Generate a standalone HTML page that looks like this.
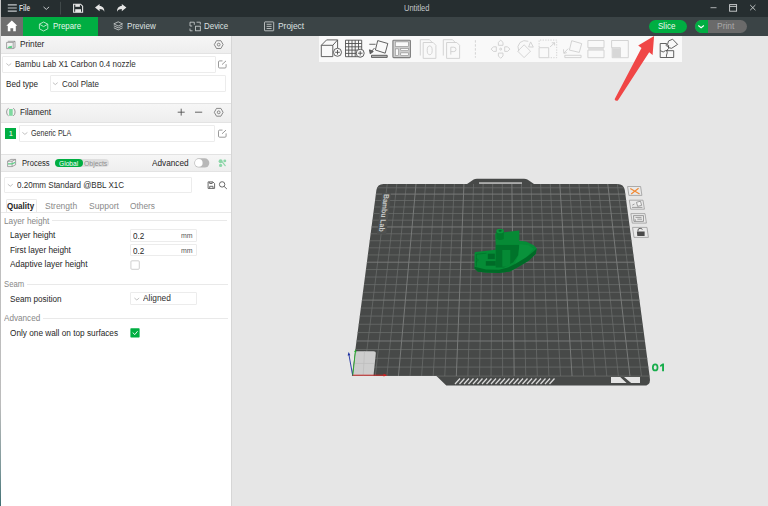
<!DOCTYPE html>
<html><head><meta charset="utf-8">
<style>
*{margin:0;padding:0;box-sizing:border-box}
html,body{width:768px;height:506px;overflow:hidden;background:#e6e6e6;font-family:"Liberation Sans",sans-serif;position:relative}
.a{position:absolute}
.t{position:absolute;white-space:nowrap;line-height:12px;height:12px;color:#333;transform-origin:0 0}
.hdr{position:absolute;left:1px;width:230px;background:linear-gradient(#f6f6f6,#eeeeee);border-bottom:1px solid #e3e3e3}
.box{position:absolute;border:1px solid #ececec;border-radius:1px}
.ln{position:absolute;height:1px;background:#e9e9e9}
</style></head><body>
<!-- bars -->
<div class="a" style="left:0;top:0;width:768px;height:17px;background:#262e30"></div>
<div class="a" style="left:0;top:17px;width:768px;height:19px;background:#3b4446"></div>
<div class="a" style="left:1px;top:17px;width:21.5px;height:19px;background:#6e6e6e"></div>
<div class="a" style="left:22.5px;top:17px;width:75px;height:19px;background:#00ae42"></div>
<div class="a" style="left:0;top:0;width:1px;height:506px;background:linear-gradient(#c6c6c6 0,#bcbcbc 80%,#7a9698 93%,#3e6e72 100%)"></div>

<!-- panel -->
<div class="a" style="left:1px;top:36px;width:230px;height:470px;background:#fff"></div>
<div class="a" style="left:231px;top:36px;width:1px;height:470px;background:#d6d6d6"></div>
<div class="hdr" style="top:36px;height:17.5px"></div>
<div class="hdr" style="top:103px;height:19.5px;border-top:1px solid #e3e3e3"></div>
<div class="hdr" style="top:153.5px;height:18px;border-top:1px solid #e3e3e3"></div>
<div class="box" style="left:2px;top:56px;width:214px;height:16.5px"></div>
<div class="box" style="left:49.5px;top:75.3px;width:176.5px;height:17px"></div>
<div class="a" style="left:5px;top:127.8px;width:11px;height:11.2px;background:#00ae42"></div>
<div class="box" style="left:19px;top:125px;width:196px;height:17px"></div>
<div class="a" style="left:55.4px;top:158.6px;width:53.4px;height:8.7px;border-radius:4.4px;background:#dedede"></div>
<div class="a" style="left:55.4px;top:158.6px;width:27.5px;height:8.7px;border-radius:4.4px;background:#00ae42"></div>
<div class="box" style="left:4.4px;top:177.3px;width:187.6px;height:16px"></div>
<div class="ln" style="left:1px;top:211.5px;width:230px"></div>
<div class="a" style="left:5.5px;top:199.4px;width:31px;height:13px;border:1px solid #e9e9e9;border-bottom:none;border-radius:1.5px 1.5px 0 0;background:#fff"></div>
<div class="ln" style="left:52.3px;top:220px;width:175.2px"></div>
<div class="box" style="left:130.2px;top:229.2px;width:66.5px;height:12.5px"></div>
<div class="box" style="left:130.2px;top:244.2px;width:66.5px;height:12.2px"></div>
<div class="ln" style="left:27px;top:283.5px;width:200.5px"></div>
<div class="box" style="left:130.4px;top:292.3px;width:66.4px;height:13.1px"></div>
<div class="ln" style="left:43px;top:317.5px;width:184.5px"></div>

<svg class="a" style="left:0;top:0" width="232" height="506">
  <!-- hamburger -->
  <g stroke="#c4c8ca" stroke-width="1.2" fill="none">
    <path d="M7.8 4.8H16.8M7.8 8H16.8M7.8 11.2H16.8"/>
    <path d="M43.5 6.9L46.3 9.4L49.1 6.9" stroke-width="1"/>
  </g>
  <rect x="60.2" y="1.8" width="0.8" height="12.8" fill="#485052"/>
  <!-- save -->
  <path d="M73.6 4.2H80.6L82.6 6.2V12.2H73.6Z" fill="none" stroke="#e6e6e6" stroke-width="1.1"/>
  <rect x="75.3" y="4.2" width="4.6" height="2.6" fill="#e6e6e6"/>
  <rect x="75.2" y="9.2" width="5.8" height="3" fill="#e6e6e6"/>
  <!-- undo redo -->
  <path d="M95 7.6L99.6 3.9V6C102.6 6 104.6 8.3 104.3 11.7C103.3 9.7 101.7 9.1 99.6 9.1V11.3Z" fill="#e6e6e6"/>
  <path d="M126.4 7.6L121.8 3.9V6C118.8 6 116.8 8.3 117.1 11.7C118.1 9.7 119.7 9.1 121.8 9.1V11.3Z" fill="#e6e6e6"/>
  <!-- home -->
  <path d="M11.8 20.6L17.3 25.8H15.8V31.3H13.2V28.3H10.4V31.3H7.8V25.8H6.3Z" fill="#fff"/>
  <!-- prepare cube -->
  <g fill="none" stroke="#cdeed8" stroke-width="0.85">
    <path d="M43.6 22L47.8 24.2V28.8L43.6 31L39.4 28.8V24.2Z"/>
    <path d="M39.4 24.2L43.6 26.6L47.8 24.2"/>
  </g>
  <!-- printer icon -->
  <g fill="none" stroke="#8f8f8f" stroke-width="0.8">
    <path d="M6.6 42.4H13.2V48.6H6.6Z"/>
    <path d="M7.8 41.3H15V47.6L13.2 48.6"/>
    <path d="M13.2 42.4L15 41.3"/>
  </g>
  <path d="M7.6 47.9L8.7 46.4L11.9 45.8V47.9Z" fill="#5ccf86"/>
  <!-- gear printer -->
  <g fill="none" stroke="#6f6f6f" stroke-width="0.8">
    <path d="M214.3 44.6L216.5 40.7H220.9L223.1 44.6L220.9 48.5H216.5Z" stroke-linejoin="round"/>
    <circle cx="218.7" cy="44.6" r="1.4"/>
  </g>
  <!-- edit icons -->
  <g fill="none" stroke="#8f8f8f" stroke-width="0.8">
    <path d="M222.5 60.9H219.6Q218.5 60.9 218.5 62V66.9Q218.5 68 219.6 68H225Q226.1 68 226.1 66.9V64.2M222 64.6L226 60.9" stroke-width="0.9"/>
    <path d="M222.5 130.1H219.6Q218.5 130.1 218.5 131.2V136.1Q218.5 137.2 219.6 137.2H225Q226.1 137.2 226.1 136.1V133.4M222 133.8L226 130.1" stroke-width="0.9"/>
  </g>
  <!-- filament icon -->
  <rect x="9.1" y="109" width="3.6" height="6.8" fill="#7fd9a0"/>
  <g fill="none" stroke="#8a8a8a" stroke-width="0.85">
    <path d="M8.6 108.3Q6.6 108.8 6.6 112Q6.6 115.2 8.6 115.8M13.1 108.3Q15.1 108.8 15.1 112Q15.1 115.2 13.1 115.8"/>
  </g>
  <!-- plus minus gear -->
  <path d="M181.2 108.7V115.6M177.7 112.2H184.7M195 112.2H202.2" stroke="#4a4a4a" stroke-width="0.85"/>
  <g fill="none" stroke="#6f6f6f" stroke-width="0.8">
    <path d="M214.3 112.3L216.5 108.4H220.9L223.1 112.3L220.9 116.2H216.5Z" stroke-linejoin="round"/>
    <circle cx="218.7" cy="112.3" r="1.4"/>
  </g>
  <!-- process icon -->
  <g fill="none" stroke="#8f8f8f" stroke-width="0.8">
    <path d="M7.6 161.2L11 159.4H15.6L12.1 161.2Z"/>
    <path d="M7.6 161.2V166.6H12.1V161.2M12.1 166.6L15.6 164.8V159.4"/>
  </g>
  <path d="M8 163.3H12L15.2 161.8V163L12 164.6H8Z" fill="#5ccf86"/>
  <!-- toggle -->
  <rect x="194.3" y="158.3" width="15" height="9.2" rx="4.6" fill="#b8b8b8"/>
  <circle cx="198.8" cy="162.9" r="3.8" fill="#fff"/>
  <!-- green compare icon -->
  <g fill="#8cd6a8">
    <circle cx="220.6" cy="161.3" r="2"/><circle cx="224.8" cy="160.9" r="1.45"/>
    <circle cx="220.6" cy="165.4" r="1.6"/>
  </g>
  <path d="M222.6 162.4L225.2 165.6" stroke="#8cd6a8" stroke-width="1.2" stroke-linecap="round"/>
  <!-- save + search -->
  <g fill="none" stroke="#5a5a5a" stroke-width="0.9">
    <path d="M208.1 181.9H212.9L214.6 183.6V188.4H208.1Z"/>
    <path d="M209.7 188.4V186.3H213V188.4M209.7 181.9V183.5H212.2V181.9"/>
    <circle cx="222.1" cy="184.4" r="2.7"/>
    <path d="M224.1 186.4L226.9 189"/>
  </g>
  <!-- chevrons -->
  <g fill="none" stroke="#a6a6a6" stroke-width="0.7">
    <path d="M6.4 63.5L8.8 65.5L11.2 63.5"/>
    <path d="M52.9 82.6L55.3 84.6L57.7 82.6"/>
    <path d="M22.4 132.4L24.9 134.4L27.4 132.4"/>
    <path d="M7.8 184.2L10.3 186.2L12.8 184.2"/>
    <path d="M134.4 298L136.8 300L139.2 298"/>
  </g>
  <!-- checkboxes -->
  <rect x="130.9" y="260.8" width="8.4" height="8.5" rx="1" fill="#fff" stroke="#c4c4c4" stroke-width="0.8"/>
  <rect x="130.4" y="328.3" width="9.2" height="9.1" rx="0.6" fill="#00ae42"/>
  <path d="M132.7 332.6L134.8 334.6L137.6 331.2" fill="none" stroke="#fff" stroke-width="0.9"/>
</svg>

<svg class="a" style="left:0;top:0" width="768" height="36">
  <!-- preview layers -->
  <g fill="none" stroke="#d3d7d7" stroke-width="0.8">
    <path d="M118.2 21.8L122.6 23.9L118.2 26L113.8 23.9Z"/>
    <path d="M113.8 25.8L118.2 27.9L122.6 25.8M113.8 27.8L118.2 29.9L122.6 27.8"/>
  </g>
  <!-- device -->
  <g fill="none" stroke="#d3d7d7" stroke-width="0.8">
    <path d="M190 22.2H194.3V24.8M190 22.2V26H192.2M192.5 30.8H190V28.5M200.3 22.2H196.5M200.3 22.2V24.5"/>
    <rect x="195.6" y="26.2" width="4.7" height="4.6"/>
  </g>
  <!-- project -->
  <g fill="none" stroke="#d3d7d7" stroke-width="0.8">
    <rect x="264.5" y="21.9" width="9.2" height="8.9" rx="0.5"/>
    <path d="M266.6 24.3H271.6M266.6 26.4H271.6M266.6 28.5H271.6"/>
  </g>
  <!-- window controls -->
  <path d="M710.5 7.7H716.5" stroke="#cfd2d3" stroke-width="0.8"/>
  <rect x="729.6" y="4.6" width="7" height="6.6" fill="none" stroke="#cfd2d3" stroke-width="0.9"/>
  <path d="M729.6 6.4H736.6" stroke="#cfd2d3" stroke-width="0.9"/>
  <path d="M750.2 5L755.4 10.2M755.4 5L750.2 10.2" stroke="#cfd2d3" stroke-width="0.9"/>
</svg>

<!-- slice / print -->
<div class="a" style="left:648.6px;top:19.9px;width:38px;height:13px;border-radius:6.5px;background:#00ae42"></div>
<div class="a" style="left:694.7px;top:19.9px;width:52.8px;height:13px;border-radius:6.5px;background:#6a6a6a;overflow:hidden"><div class="a" style="left:0;top:0;width:13.3px;height:13px;background:#00ae42"></div></div>
<svg class="a" style="left:694px;top:19px" width="16" height="16"><path d="M4.3 6.5L7.1 8.7L9.9 6.5" fill="none" stroke="#fff" stroke-width="1.1"/></svg>

<!-- viewport toolbar -->
<div class="a" style="left:318.7px;top:36px;width:363px;height:25.6px;background:#f9f9f9"></div>
<svg class="a" style="left:0;top:0" width="768" height="506">
  <g fill="none" stroke="#505050" stroke-width="0.9" stroke-linejoin="round">
    <!-- cube + -->
    <path d="M321.3 45.3H332.8V56.6H321.3Z"/>
    <path d="M321.3 45.3L326.6 39.9H337.6L332.8 45.3"/>
    <path d="M337.6 39.9V48.3"/>
    <circle cx="337.5" cy="52.3" r="4" fill="#f9f9f9"/>
    <path d="M335.2 52.3H339.8M337.5 50V54.6"/>
    <!-- grid + -->
    <path d="M345.5 40.2H361.7V56.7H345.5Z"/>
    <path d="M345.5 43.5H361.7M345.5 46.8H361.7M345.5 50.1H361.7M345.5 53.4H361.7M348.7 40.2V56.7M352 40.2V56.7M355.2 40.2V56.7M358.5 40.2V56.7"/>
    <circle cx="360.2" cy="53.2" r="4" fill="#f9f9f9"/>
    <path d="M357.9 53.2H362.5M360.2 50.9V55.5"/>
    <!-- orient -->
    <path d="M377.7 40.6L387.8 43.5L385.2 53.2L375.4 50Z"/>
    <path d="M371.5 55.3H387.2V57.4H371.5Z" fill="#bbb"/>
    <path d="M369.3 44.3H375.6" stroke-width="1.1" stroke="#777"/>
    <path d="M370.5 52.5L374.5 48"/>
    <path d="M369.5 49.8L370.2 53.8L373.3 51.5Z" fill="#666"/>
    <!-- assembly -->
    <path d="M660.2 43.5H666.5Q665.5 45.5 667 46.5L668 45.6Q669 47 668.5 48.5L666.6 50.7H673.7V57.5H660.2Z"/>
    <path d="M660.2 50.6L663.2 52L665.5 50.6L667.5 50.6M666.8 50.7Q667.8 53 666.5 55Q666.2 56.3 666.8 57.5"/>
    <path d="M668.5 41L672.6 39.2L677.6 44.4L671.6 48.3L668.4 47.6Q669.5 45 667.5 44.6Z"/>
  </g>
  <!-- arrange -->
  <rect x="392.9" y="40.2" width="17.5" height="17.4" rx="0.8" fill="#cdcdcd" stroke="#7e7e7e" stroke-width="1.1"/>
  <g fill="#fafafa" stroke="#7a7a7a" stroke-width="0.5">
    <rect x="395.3" y="41.9" width="13" height="4.5"/>
    <rect x="395.3" y="48.9" width="3.2" height="6.6"/>
    <rect x="400.8" y="48.7" width="7.5" height="2"/>
    <rect x="400.8" y="52.9" width="7.5" height="2.6"/>
  </g>
  <g fill="none" stroke="#cfcfcf" stroke-width="0.9" stroke-linejoin="round">
    <!-- 0 plate -->
    <path d="M420.3 55.5V39.7H429.5L432.3 42.5"/>
    <path d="M423.2 42.5H433.2L435.9 45.3V58.4H423.2Z"/>
    <ellipse cx="429.7" cy="50.3" rx="2.5" ry="4.4"/>
    <!-- P plate -->
    <path d="M443.3 55.5V39.7H452.5L455.3 42.5"/>
    <path d="M446.6 42.5H456.8L459.6 45.3V58.4H446.6Z"/>
    <path d="M450.8 54.6V47.2H453.8Q456 47.2 456 49.4Q456 51.6 453.8 51.6H450.8"/>
    <!-- separator -->
    <path d="M475.4 40.2V57.7" stroke-dasharray="2.4 1.6"/>
    <!-- move -->
    <path d="M500.7 40.1L503 42.4V45.3H498.4V42.4Z"/>
    <path d="M500.7 58.3L503 56V53.1H498.4V56Z"/>
    <path d="M491.1 49.1L493.4 46.8H496.3V51.4H493.4Z"/>
    <path d="M509.9 49.1L507.6 46.8H504.7V51.4H507.6Z"/>
    <circle cx="500.7" cy="49.1" r="1"/>
    <!-- rotate -->
    <path d="M524.1 44.8L530.5 51.2L524.1 57.6L517.7 51.2Z"/>
    <path d="M518.8 51.2Q516.5 46 520 42.5Q523.5 39.5 528.3 41.3"/>
    <path d="M528.6 46.9L533.3 47.1L530.6 41.9Z"/>
    <!-- scale -->
    <path d="M539.1 47V40.1H556.7V57.7H549" stroke-dasharray="1.3 1.3"/>
    <path d="M539.1 47.7H548.7V57.7H539.1Z"/>
    <path d="M550 47L554.6 42.8M551.8 42.8H554.6V45.5"/>
    <!-- place on face -->
    <path d="M571.7 40.7L581.7 43.6L579.3 52.4L569.4 50.1Z"/>
    <path d="M564.8 55.3H581.1V57.6H564.8Z"/>
    <path d="M564 53L568.2 48.6M563.5 49.3L563.8 53.4L566.8 52.6"/>
    <!-- cut -->
    <path d="M587.9 40.5H604V47.6H587.9ZM587.9 50.1H604V57.7H587.9Z"/>
    <!-- support -->
    <path d="M611.6 40.5H628.3V57.7H620.4V47.7H611.6Z"/>
    <path d="M612.2 47.7V57.7H620.4"/>
  </g>
  <rect x="588.2" y="47.8" width="15.6" height="2.2" fill="#dcdcdc"/>
  <rect x="612.4" y="48.2" width="7.6" height="9.2" fill="#d7d7d7"/>

  <!-- plate -->
  <path d="M466.7 184.3L473.6 179.4Q475 178.8 477 178.8H524Q526 178.8 527.4 179.4L534.4 184.3Z" fill="#474948"/>
  <rect x="479" y="182.4" width="43" height="1.3" fill="#d6d6d6"/>
  <defs><clipPath id="pc"><path d="M383.5 184H617.6Q623.7 184 624.8 190L649.6 376L649.9 379Q650.6 385.6 643.5 385.6H446.3L436.5 376H351.9L376.4 190Q377.4 184 383.5 184Z"/></clipPath></defs>
  <path d="M383.5 184H617.6Q623.7 184 624.8 190L649.6 376L649.9 379Q650.6 385.6 643.5 385.6H446.3L436.5 376H351.9L376.4 190Q377.4 184 383.5 184Z" fill="#474948"/>
  <g stroke="#6b6d6c" stroke-width="0.75" fill="none" clip-path="url(#pc)"><path d="M363.73,376.00L387.24,184.00M375.30,376.00L396.83,184.00M386.88,376.00L406.42,184.00M410.02,376.00L425.59,184.00M421.60,376.00L435.18,184.00M433.17,376.00L444.77,184.00M444.75,376.00L454.35,184.00M467.90,376.00L473.53,184.00M479.47,376.00L483.12,184.00M491.04,376.00L492.70,184.00M502.62,376.00L502.29,184.00M525.77,376.00L521.47,184.00M537.34,376.00L531.05,184.00M548.92,376.00L540.64,184.00M560.49,376.00L550.23,184.00M583.64,376.00L569.40,184.00M595.21,376.00L578.99,184.00M606.79,376.00L588.58,184.00M618.36,376.00L598.17,184.00M641.51,376.00L617.34,184.00M347.93,376.07L653.51,376.07M349.16,367.09L652.28,367.09M350.36,358.25L651.08,358.25M351.55,349.55L649.89,349.55M353.87,332.56L647.57,332.56M355.01,324.26L646.43,324.26M356.12,316.08L645.32,316.08M357.22,308.04L644.22,308.04M359.37,292.30L642.07,292.30M360.42,284.61L641.02,284.61M361.46,277.03L639.98,277.03M362.48,269.56L638.96,269.56M364.47,254.95L636.97,254.95M365.45,247.80L635.99,247.80M366.41,240.75L635.03,240.75M367.36,233.81L634.08,233.81M369.22,220.20L632.22,220.20M370.13,213.54L631.31,213.54M371.03,206.97L630.41,206.97M371.91,200.49L629.53,200.49M373.65,187.79L627.79,187.79"/></g>
  <g stroke="#7a7c7b" stroke-width="0.95" fill="none" clip-path="url(#pc)"><path d="M398.45,376.00L416.00,184.00M456.32,376.00L463.94,184.00M514.19,376.00L511.88,184.00M572.06,376.00L559.82,184.00M629.93,376.00L607.75,184.00M352.72,340.99L648.72,340.99M358.31,300.11L643.13,300.11M363.48,262.20L637.96,262.20M368.30,226.96L633.14,226.96M372.79,194.10L628.65,194.10"/></g>
  <!-- hatch strip -->
  <g stroke="#d8d8d8" stroke-width="1.3">
    <path d="M455 384L460 378.5M459.5 384L464.5 378.5M464 384L469 378.5M468.5 384L473.5 378.5M473 384L478 378.5M477.5 384L482.5 378.5M482 384L487 378.5M486.5 384L491.5 378.5M491 384L496 378.5M495.5 384L500.5 378.5M500 384L505 378.5M504.5 384L509.5 378.5M509 384L514 378.5M513.5 384L518.5 378.5M518 384L523 378.5M522.5 384L527.5 378.5M527 384L532 378.5M531.5 384L536.5 378.5M536 384L541 378.5M540.5 384L545.5 378.5M545 384L550 378.5M549.5 384L554.5 378.5"/>
  </g>
  <path d="M611 377H620.2L626.6 383H611Z M624 377H640V383H631.2Z" fill="#e4e4e4"/>
  <!-- bambu lab text strip -->
  <path d="M382 193H391L386.2 234.2H377Z" fill="#4f5150"/>
  <!-- excluded square & axes -->
  <path d="M355.6 351.3H373.5Q376 351.3 375.8 353.5L373.5 375.5H352.8Z" fill="#cdcdcd"/>
  <path d="M364.5 351.3L363.2 375.5M353.9 363.4H374.6" stroke="#b8b8b8" stroke-width="0.6"/>
  <path d="M352.6 375.2L348.9 354.5" stroke="#1a2fa0" stroke-width="0.9"/>
  <path d="M347.6 355.5L348.7 352L350.3 355.3Z" fill="#1a2fa0"/>
  <path d="M352.8 375.2L355.4 351" stroke="#22b02a" stroke-width="0.9"/>
  <path d="M354.2 352L355.5 349.2L356.6 352.2Z" fill="#22b02a"/>
  <path d="M352.8 375.2H385" stroke="#d42020" stroke-width="0.9"/>
  <path d="M383.5 373.8L387.5 375.2L383.5 376.6Z" fill="#d42020"/>
  <!-- plate side buttons -->
  <g fill="#e9e9e9" stroke="#9a9a9a" stroke-width="0.8">
    <path d="M627.6 186.5H640.6L641.9 195.4H628.9Z"/>
    <path d="M629.3 200.2H643L644.4 209.2H630.7Z"/>
    <path d="M630.9 213.6H645L646.4 223.1H632.3Z"/>
    <path d="M632.6 227.4H647L648.4 237.4H634Z"/>
  </g>
  <path d="M630.3 188.4L639.6 193.9M638.6 188.3L631.2 194" stroke="#f08a35" stroke-width="1.2"/>
  <g fill="none" stroke="#7a7a7a" stroke-width="0.7">
    <path d="M636.5 202.3L640.5 201.2L641.6 205.4L637.6 206.3Z" fill="#f4f4f4"/>
    <path d="M632 207.4H642.4"/>
    <path d="M632.3 205.2L634.5 204"/>
    <path d="M633.5 215.6H643.5V221.4H633.9Z"/>
    <path d="M635.5 217.4H641.5M635.2 219.2V221.2M637.3 219.2H642"/>
  </g>
  <path d="M636.9 231.4H644.6V236H637.3Z" fill="#4a4a4a"/>
  <path d="M638 231.3V230Q638 228.4 640.2 228.4Q642.2 228.4 642.3 229.6" fill="none" stroke="#4a4a4a" stroke-width="0.9"/>
  <!-- 01 -->
  <ellipse cx="655.2" cy="367.4" rx="2.35" ry="3.05" fill="none" stroke="#17ad4b" stroke-width="1.75"/>
  <path d="M660 365.2L662.6 363.5H664V371.2H662.1V366.1L660.4 367.1Z" fill="#17ad4b"/>
  <!-- bambu text -->
  <text transform="matrix(-0.117,0.91,-1,0,383.9,194)" font-family="Liberation Sans" font-weight="bold" font-size="7.6" fill="#c9cbca">Bambu Lab</text>

  <!-- boat -->
  <g>
    <path d="M475.6 252L495.7 249.7L495.7 244.8L519.3 240.8L526 241.6L533.7 245.3L536.8 248.4L535.8 253.8L529 260.6L519 266.5L510 271.5L499 273L486 272.5L478 271.7L474.5 268.5V254Q474.5 252.2 475.6 252Z" fill="#058c36"/>
    <path d="M476.4 266.5V254.2L486.5 253.2" fill="none" stroke="#00712a" stroke-width="0.7"/>
    <path d="M476.6 258.2L478.4 260L476.6 261.8" fill="none" stroke="#006a28" stroke-width="0.6"/>
    <rect x="487.8" y="253.7" width="7" height="5.4" fill="#006b28"/>
    <rect x="485.8" y="261.1" width="9.9" height="4.6" fill="#006a27"/>
    <path d="M495.7 244.8H519.3L518.3 255L513 262.5L504 267.5H495.7Z" fill="#00732a"/>
    <path d="M502.3 250H510.3V264.8L506 266.8H502.3Z" fill="#058a35"/>
    <path d="M519.3 244L528.5 245.3L533.5 248.6L528 255.8L520 261.5L514.5 264.5L518.5 255Z" fill="#09923b"/>
    <path d="M495.2 233.4L519.3 230.4L519.3 244.8H495.7Z" fill="#068a35"/>
    <path d="M474.5 266.8L486 269.5L499 269.8L508 267.5L516 263.5L526 257.5L533.5 251.5L536.6 248.6L535.8 253.8L529 260.6L519 266.5L510 271.5L499 273L486 272.5L478 271.7L474.5 268.5Z" fill="#006a27"/>
    <path d="M496.4 231H503.8V239Q500.1 241 496.4 239Z" fill="#027a2c"/>
    <ellipse cx="500.1" cy="231" rx="3.7" ry="2.3" fill="#0a963b"/>
    <ellipse cx="500.1" cy="230.8" rx="1.6" ry="1" fill="#00692a"/>
  </g>

  <!-- red arrow -->
  <path d="M614.6 99.2Q615.6 101.6 617.9 100.4L649.2 52.3L652.6 55L654.1 36L638.2 45.6L641.5 47.9Z" fill="#f04646"/>
</svg>
<div class="t" style="left:18.78px;top:2px;font-size:8.6px;transform:scaleX(0.7512);color:#d0d4d6;font-weight:bold">File</div>
<div class="t" style="left:403.72px;top:2px;font-size:8.4px;transform:scaleX(0.8971);color:#c4c8ca;font-weight:normal">Untitled</div>
<div class="t" style="left:52.91px;top:20px;font-size:8.7px;transform:scaleX(0.9065);color:#e4f6ea;font-weight:normal">Prepare</div>
<div class="t" style="left:127.00px;top:20px;font-size:8.7px;transform:scaleX(0.9295);color:#dde1e1;font-weight:normal">Preview</div>
<div class="t" style="left:204.30px;top:20px;font-size:8.7px;transform:scaleX(0.9122);color:#dde1e1;font-weight:normal">Device</div>
<div class="t" style="left:277.58px;top:20px;font-size:8.7px;transform:scaleX(0.9664);color:#dde1e1;font-weight:normal">Project</div>
<div class="t" style="left:658.35px;top:20px;font-size:8.7px;transform:scaleX(0.9233);color:#eef9f2;font-weight:normal">Slice</div>
<div class="t" style="left:717.38px;top:20px;font-size:8.7px;transform:scaleX(0.9710);color:#a9a9a9;font-weight:normal">Print</div>
<div class="t" style="left:20.19px;top:38px;font-size:8.9px;transform:scaleX(0.9295);color:#262626;font-weight:normal">Printer</div>
<div class="t" style="left:14.60px;top:58px;font-size:8.9px;transform:scaleX(0.9070);color:#2e2e2e;font-weight:normal">Bambu Lab X1 Carbon 0.4 nozzle</div>
<div class="t" style="left:6.39px;top:78px;font-size:8.9px;transform:scaleX(0.9155);color:#262626;font-weight:normal">Bed type</div>
<div class="t" style="left:61.80px;top:78px;font-size:8.9px;transform:scaleX(0.9001);color:#2e2e2e;font-weight:normal">Cool Plate</div>
<div class="t" style="left:20.19px;top:106px;font-size:8.9px;transform:scaleX(0.9131);color:#262626;font-weight:normal">Filament</div>
<div class="t" style="left:8.70px;top:128px;font-size:7.5px;transform:scaleX(1.0000);color:#fff;font-weight:normal">1</div>
<div class="t" style="left:31.24px;top:127px;font-size:8.4px;transform:scaleX(0.8492);color:#2e2e2e;font-weight:normal">Generic PLA</div>
<div class="t" style="left:21.82px;top:157px;font-size:8.9px;transform:scaleX(0.8601);color:#262626;font-weight:normal">Process</div>
<div class="t" style="left:59.47px;top:158px;font-size:7.8px;transform:scaleX(0.8530);color:#ffffff;font-weight:normal">Global</div>
<div class="t" style="left:83.56px;top:158px;font-size:7.8px;transform:scaleX(0.8788);color:#909090;font-weight:normal">Objects</div>
<div class="t" style="left:151.99px;top:157px;font-size:8.9px;transform:scaleX(0.9288);color:#262626;font-weight:normal">Advanced</div>
<div class="t" style="left:16.50px;top:179px;font-size:8.9px;transform:scaleX(0.9058);color:#2e2e2e;font-weight:normal">0.20mm Standard @BBL X1C</div>
<div class="t" style="left:6.60px;top:200px;font-size:8.9px;transform:scaleX(0.9003);color:#262626;font-weight:bold">Quality</div>
<div class="t" style="left:45.17px;top:200px;font-size:8.9px;transform:scaleX(0.9592);color:#8a8a8a;font-weight:normal">Strength</div>
<div class="t" style="left:88.57px;top:200px;font-size:8.9px;transform:scaleX(0.9599);color:#8a8a8a;font-weight:normal">Support</div>
<div class="t" style="left:130.28px;top:200px;font-size:8.9px;transform:scaleX(0.9385);color:#8a8a8a;font-weight:normal">Others</div>
<div class="t" style="left:4.29px;top:215px;font-size:8.9px;transform:scaleX(0.9282);color:#878787;font-weight:normal">Layer height</div>
<div class="t" style="left:9.79px;top:229px;font-size:8.9px;transform:scaleX(0.9282);color:#262626;font-weight:normal">Layer height</div>
<div class="t" style="left:133.44px;top:230px;font-size:8.9px;transform:scaleX(0.9144);color:#262626;font-weight:normal">0.2</div>
<div class="t" style="left:181.45px;top:230px;font-size:7.6px;transform:scaleX(0.9113);color:#555;font-weight:normal">mm</div>
<div class="t" style="left:9.79px;top:244px;font-size:8.9px;transform:scaleX(0.9283);color:#262626;font-weight:normal">First layer height</div>
<div class="t" style="left:133.44px;top:245px;font-size:8.9px;transform:scaleX(0.9144);color:#262626;font-weight:normal">0.2</div>
<div class="t" style="left:181.45px;top:245px;font-size:7.6px;transform:scaleX(0.9113);color:#555;font-weight:normal">mm</div>
<div class="t" style="left:9.78px;top:258px;font-size:8.9px;transform:scaleX(0.9356);color:#262626;font-weight:normal">Adaptive layer height</div>
<div class="t" style="left:4.31px;top:278px;font-size:8.9px;transform:scaleX(0.8669);color:#878787;font-weight:normal">Seam</div>
<div class="t" style="left:9.79px;top:293px;font-size:8.9px;transform:scaleX(0.9160);color:#262626;font-weight:normal">Seam position</div>
<div class="t" style="left:142.58px;top:292px;font-size:8.9px;transform:scaleX(0.9386);color:#2e2e2e;font-weight:normal">Aligned</div>
<div class="t" style="left:4.29px;top:312px;font-size:8.9px;transform:scaleX(0.9186);color:#878787;font-weight:normal">Advanced</div>
<div class="t" style="left:9.79px;top:327px;font-size:8.9px;transform:scaleX(0.9282);color:#262626;font-weight:normal">Only one wall on top surfaces</div>
</body></html>
